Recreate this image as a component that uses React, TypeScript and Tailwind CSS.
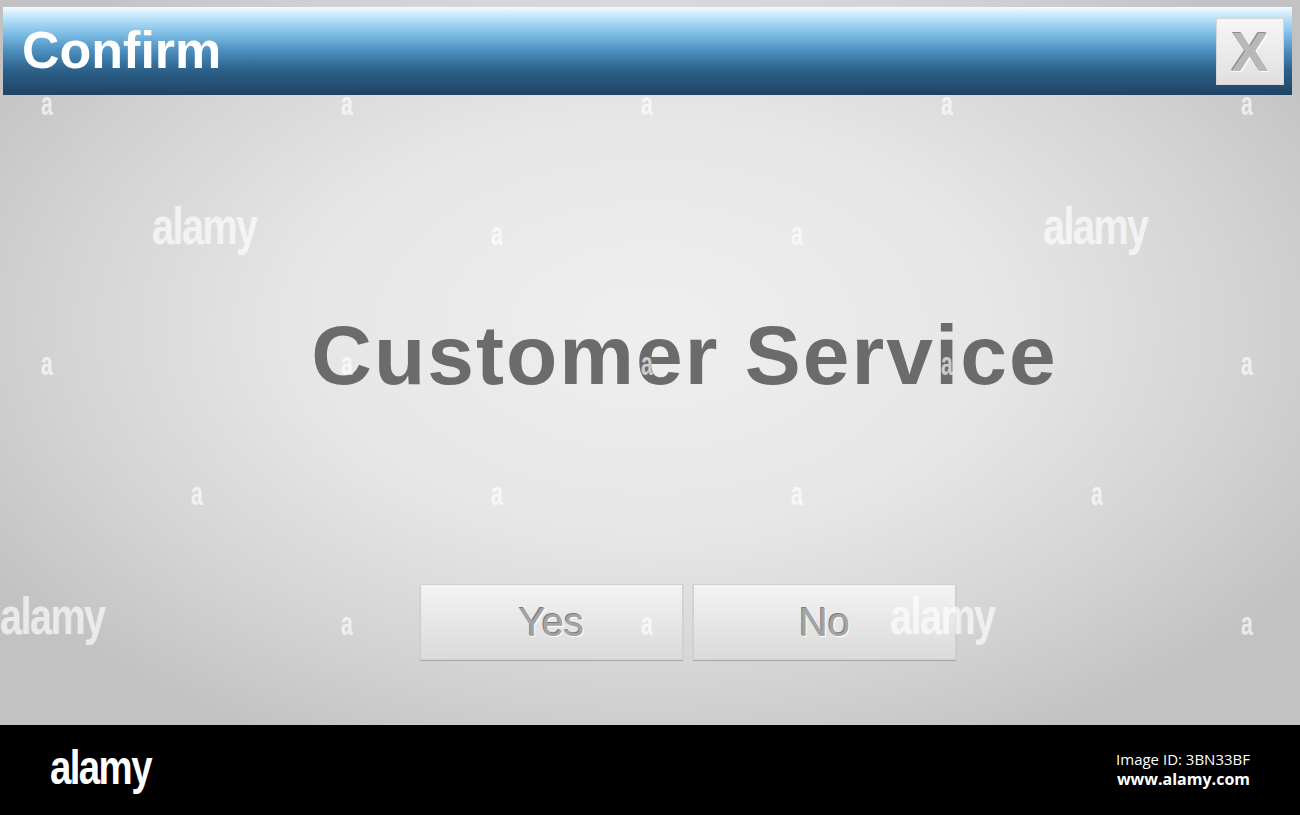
import React from "react";

const marks: { x: number; y: number }[] = [
  { x: 41, y: 86 }, { x: 341, y: 86 }, { x: 641, y: 86 }, { x: 941, y: 86 }, { x: 1241, y: 86 },
  { x: 491, y: 216 }, { x: 791, y: 216 },
  { x: 41, y: 346 }, { x: 341, y: 346 }, { x: 641, y: 346 }, { x: 941, y: 346 }, { x: 1241, y: 346 },
  { x: 191, y: 476 }, { x: 491, y: 476 }, { x: 791, y: 476 }, { x: 1091, y: 476 },
  { x: 341, y: 606 }, { x: 641, y: 606 }, { x: 1241, y: 606 },
];

const words: { x: number; y: number }[] = [
  { x: 152, y: 200 }, { x: 1043, y: 200 }, { x: 0, y: 590 }, { x: 890, y: 590 },
];

function Stamp({ x, y, big }: { x: number; y: number; big?: boolean }) {
  return (
    <span
      className={`pointer-events-none absolute origin-left font-bold leading-none text-white/65 ${big ? "scale-x-[0.76] text-[52px] tracking-[-2px]" : "scale-x-[0.62] text-[34px]"}`}
      style={{ left: x, top: y, fontFamily: '"Liberation Sans", Arial, sans-serif' }}
    >
      {big ? "alamy" : "a"}
    </span>
  );
}

export default function App() {
  return (
    <div className="flex h-[815px] w-[1300px] flex-col overflow-hidden" style={{ fontFamily: '"Liberation Sans", Arial, sans-serif' }}>
      <div className="relative flex h-[725px] flex-col bg-[radial-gradient(ellipse_60%_65%_at_50%_45%,#efefef_0%,#e6e6e6_45%,#d4d4d4_75%,#c2c2c2_100%)] pt-[7px]">
        {/* title bar */}
        <div className="ml-[3px] mr-[8px] flex h-[88px] items-center justify-between bg-[linear-gradient(to_bottom,#f2fbff_0%,#b4e0f8_14%,#7fbde6_30%,#4b8ebd_50%,#2c6189_72%,#1f4362_100%)] pl-[19px] pr-[8px]">
          <span className="pb-[2px] text-[52px] font-bold leading-none text-white">Confirm</span>
          <div className="flex h-[67px] w-[68px] items-center justify-center border border-[#d6d6d6] bg-[linear-gradient(to_bottom,#f6f6f6,#e0e0e0)]">
            <span className="pt-[2px] text-[56px] font-bold leading-none text-[#b8b8b8] [text-shadow:-1px_-1px_0_#8c8c8c,1px_1px_0_#ffffff]">X</span>
          </div>
        </div>

        {/* message */}
        <div className="flex flex-1 flex-col items-center">
          <div className="mt-[218px] pl-[69px] text-[84px] font-bold leading-none tracking-[2px] text-[#6b6b6b]">
            Customer Service
          </div>
          <div className="mt-[187px] flex gap-[10px] pl-[76px]">
            <button className="flex h-[76px] w-[263px] items-center justify-center border border-[#cfcfcf] bg-[linear-gradient(to_bottom,#f3f3f3,#e4e4e4_60%,#dadada)] shadow-[0_1px_1px_rgba(0,0,0,0.18)]">
              <span className="text-[40px] leading-none text-[#a4a4a4] [text-shadow:-1px_-1px_0_#7a7a7a,1px_1px_0_#ffffff]">Yes</span>
            </button>
            <button className="flex h-[76px] w-[263px] items-center justify-center border border-[#cfcfcf] bg-[linear-gradient(to_bottom,#f3f3f3,#e4e4e4_60%,#dadada)] shadow-[0_1px_1px_rgba(0,0,0,0.18)]">
              <span className="text-[40px] leading-none text-[#a4a4a4] [text-shadow:-1px_-1px_0_#7a7a7a,1px_1px_0_#ffffff]">No</span>
            </button>
          </div>
        </div>

        {marks.map((m, i) => (
          <Stamp key={`a${i}`} x={m.x} y={m.y} />
        ))}
        {words.map((w, i) => (
          <Stamp key={`w${i}`} x={w.x} y={w.y} big />
        ))}
      </div>

      {/* footer strip */}
      <div className="flex h-[90px] items-center justify-between bg-black pl-[50px] pr-[50px]">
        <span className="origin-left scale-x-[0.8] pb-[4px] text-[48px] font-bold leading-none tracking-[-2px] text-white">alamy</span>
        <div className="flex flex-col items-end gap-[4px] pb-[2px] text-white" style={{ fontFamily: '"Open Sans", "DejaVu Sans", sans-serif' }}>
          <span className="text-[15px] leading-none">Image ID: 3BN33BF</span>
          <span className="text-[16px] font-bold leading-none">www.alamy.com</span>
        </div>
      </div>
    </div>
  );
}
